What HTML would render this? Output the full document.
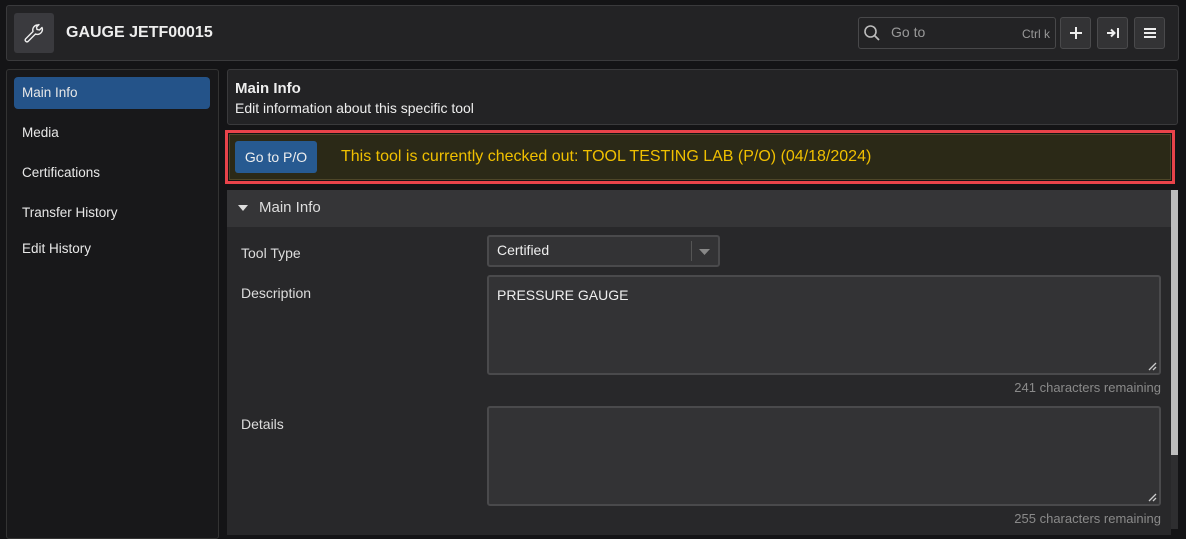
<!DOCTYPE html>
<html><head><style>
*{box-sizing:border-box;margin:0;padding:0}
body{width:1186px;height:529px;background:#141416;font-family:"Liberation Sans",sans-serif;color:#e6e6e6;position:relative;overflow:hidden;font-size:14px}
.a{position:absolute}
.nav{position:absolute;left:22px;font-size:14px;color:#e8e8e8}
.lbl{position:absolute;left:241px;font-size:14px;color:#ddd}
.ta{position:absolute;left:487px;width:674px;height:100px;background:#333335;border:2px solid #4a4a4c;border-radius:3px}
.rem{position:absolute;right:25px;font-size:13px;color:#8a8a8a}
.btn{position:absolute;top:17px;width:31px;height:32px;background:#333335;border:1px solid #4a4a4c;border-radius:3px;display:flex;align-items:center;justify-content:center}
</style></head><body>
<div class="a" style="left:6px;top:5px;width:1173px;height:56px;background:#232325;border:1px solid #3a3a3c;border-radius:3px"></div>
<div class="a" style="left:14px;top:13px;width:40px;height:40px;background:#3a3a3e;border-radius:3px">
<svg width="40" height="40" viewBox="0 0 40 40"><path d="M24 12a5 5 0 0 0-5 6.5l-7.5 7.5a1.8 1.8 0 0 0 2.5 2.5l7.5-7.5A5 5 0 0 0 28 14.5l-2.5 2.5-2.5-.5-.5-2.5L25 11.6a5 5 0 0 0-1 .4z" fill="none" stroke="#eee" stroke-width="1.4" stroke-linejoin="round"/></svg></div>
<div class="a" style="left:66px;top:24px;font-size:16px;font-weight:bold;color:#eee">GAUGE JETF00015</div>
<div class="a" style="left:858px;top:17px;width:198px;height:32px;background:#232325;border:1px solid #48484a;border-radius:3px"></div>
<svg class="a" style="left:863px;top:24px" width="18" height="18"><circle cx="7.5" cy="7.5" r="5.5" fill="none" stroke="#bbb" stroke-width="1.6"/><path d="M11.5 11.5l4.5 4.5" stroke="#bbb" stroke-width="1.8"/></svg>
<div class="a" style="left:891px;top:24px;font-size:14px;color:#999">Go to</div>
<div class="a" style="left:1022px;top:27px;font-size:12px;color:#999">Ctrl k</div>
<div class="btn" style="left:1060px"><svg width="14" height="14"><path d="M7 1v12M1 7h12" stroke="#eee" stroke-width="2"/></svg></div>
<div class="btn" style="left:1097px"><svg width="14" height="14"><path d="M1 7h7M5 3.5L8.5 7 5 10.5" stroke="#eee" stroke-width="2" fill="none"/><path d="M12 2v10" stroke="#eee" stroke-width="2"/></svg></div>
<div class="btn" style="left:1134px"><svg width="14" height="14"><path d="M1 3h12M1 7h12M1 11h12" stroke="#eee" stroke-width="2"/></svg></div>

<div class="a" style="left:6px;top:69px;width:213px;height:470px;background:#18181a;border:1px solid #333;border-radius:3px"></div>
<div class="a" style="left:14px;top:77px;width:196px;height:32px;background:#245389;border-radius:4px"></div>
<div class="nav" style="top:85px;font-size:13.5px">Main Info</div>
<div class="nav" style="top:125px;font-size:13.5px">Media</div>
<div class="nav" style="top:165px;font-size:13.5px">Certifications</div>
<div class="nav" style="top:205px;font-size:13.5px">Transfer History</div>
<div class="nav" style="top:241px;font-size:13.5px">Edit History</div>

<div class="a" style="left:227px;top:69px;width:951px;height:56px;background:#232325;border:1px solid #3a3a3c;border-radius:3px"></div>
<div class="a" style="left:235px;top:80px;font-size:15px;font-weight:bold;color:#eee">Main Info</div>
<div class="a" style="left:235px;top:100px;font-size:14px;color:#eee">Edit information about this specific tool</div>

<div class="a" style="left:225px;top:130px;width:950px;height:54px;border:3px solid #e8434a;background:#141414"></div>
<div class="a" style="left:229px;top:134px;width:942px;height:46px;background:#2b2917;border:1px solid #4e4628"></div>
<div class="a" style="left:235px;top:141px;width:82px;height:32px;background:#275a91;border-radius:3px;color:#eee;font-size:14px;text-align:center;line-height:32px">Go to P/O</div>
<div class="a" style="left:341px;top:148px;font-size:16px;color:#f0c000">This tool is currently checked out: TOOL TESTING LAB (P/O) (04/18/2024)</div>

<div class="a" style="left:227px;top:190px;width:944px;height:345px;background:#28282a"></div>
<div class="a" style="left:227px;top:190px;width:944px;height:37px;background:#353537"></div>
<svg class="a" style="left:237px;top:204px" width="12" height="8"><path d="M1 1h10L6 7z" fill="#ddd"/></svg>
<div class="a" style="left:259px;top:199px;font-size:15px;color:#ddd">Main Info</div>
<div class="a" style="left:1171px;top:190px;width:7px;height:339px;background:#2e2e30"></div>
<div class="a" style="left:1171px;top:190px;width:7px;height:265px;background:#bdbdbd"></div>

<div class="lbl" style="top:245px">Tool Type</div>
<div class="a" style="left:487px;top:235px;width:233px;height:32px;background:#333335;border:2px solid #4a4a4c;border-radius:3px"></div>
<div class="a" style="left:497px;top:242px;font-size:14px;color:#eee">Certified</div>
<div class="a" style="left:691px;top:241px;width:1px;height:20px;background:#555"></div>
<svg class="a" style="left:699px;top:249px" width="11" height="6"><path d="M0 0h11L5.5 6z" fill="#888"/></svg>

<div class="lbl" style="top:285px">Description</div>
<div class="ta" style="top:275px"></div>
<div class="a" style="left:497px;top:287px;font-size:14px;color:#eee">PRESSURE GAUGE</div>
<div class="rem" style="top:380px">241 characters remaining</div>

<div class="lbl" style="top:416px">Details</div>
<div class="ta" style="top:406px"></div>
<div class="rem" style="top:511px">255 characters remaining</div>
<svg class="a" style="left:1148px;top:362px" width="9" height="9"><path d="M8 1L1 8M8 5L5 8" stroke="#ccc" stroke-width="1.3"/></svg>
<svg class="a" style="left:1148px;top:493px" width="9" height="9"><path d="M8 1L1 8M8 5L5 8" stroke="#ccc" stroke-width="1.3"/></svg>
</body></html>
